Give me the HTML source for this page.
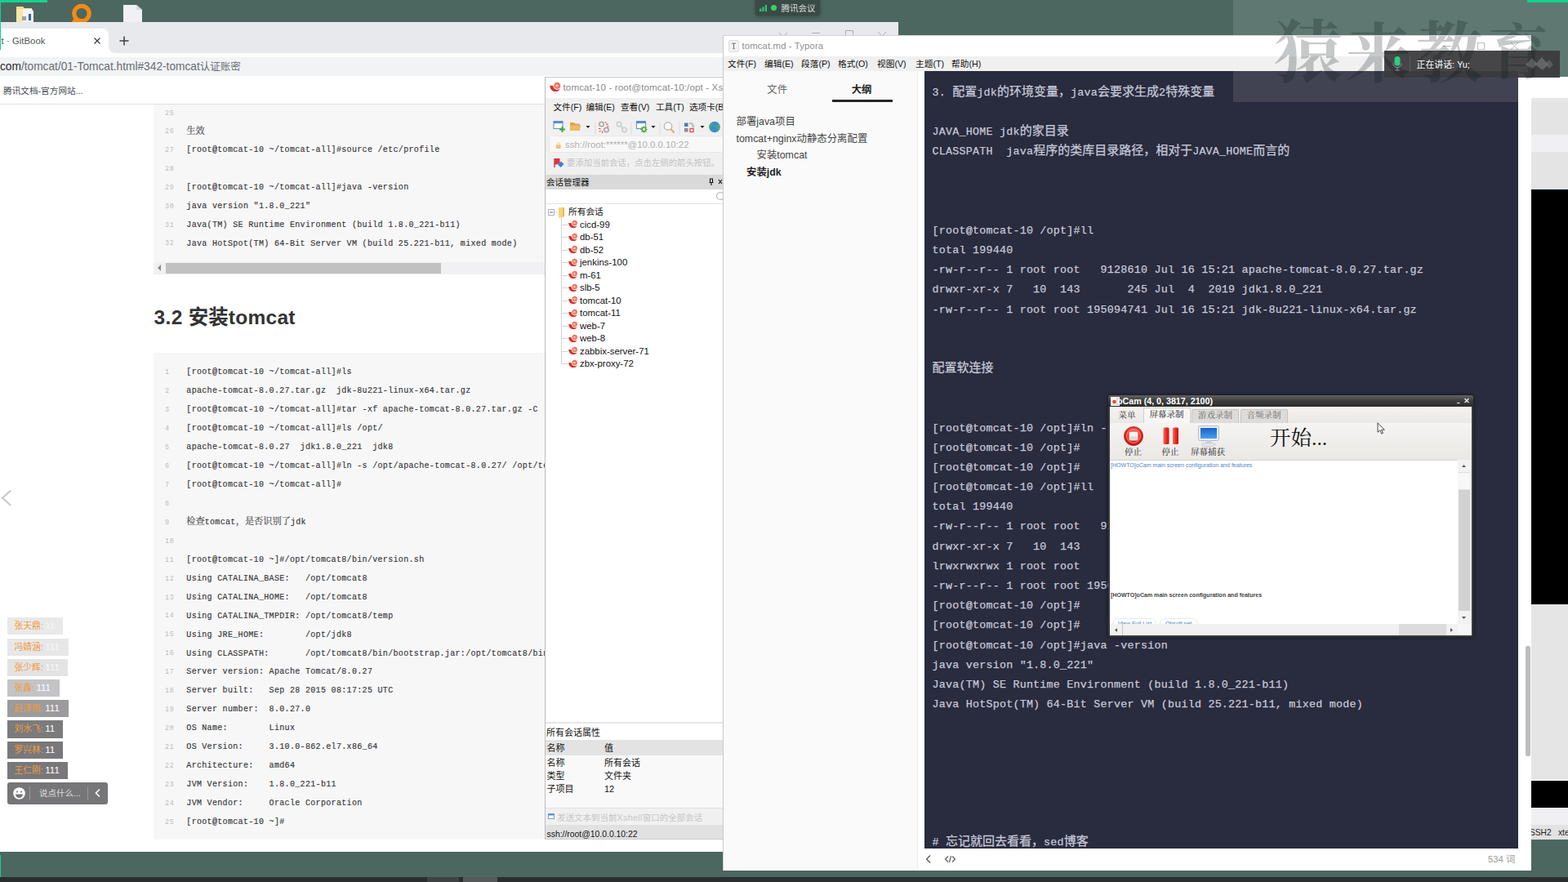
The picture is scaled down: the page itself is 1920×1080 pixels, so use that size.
<!DOCTYPE html>
<html lang="zh-CN"><head><meta charset="utf-8"><title>screen</title>
<style>
*{box-sizing:border-box;margin:0;padding:0}
html,body{width:1920px;height:1080px;overflow:hidden;background:#4b6760}
body{font-family:"Liberation Sans","Noto Sans CJK SC",sans-serif;font-size:12px;color:#222}
#screen{position:relative;width:1920px;height:1080px;overflow:hidden;background:#4b6760}
.a{position:absolute}
.t{position:absolute;white-space:pre;line-height:1}
.mono{font-family:"Liberation Mono","Noto Sans CJK SC",monospace}
.serif{font-family:"Liberation Serif","Noto Serif CJK SC",serif}
/* browser */
#br{left:0;top:27px;width:1100px;height:1016px;background:#fff;overflow:hidden}
.gl{position:absolute;left:0;white-space:pre;font-family:"Liberation Mono","Noto Sans CJK SC",monospace;font-size:10px;letter-spacing:.33px;line-height:14px;height:14px;color:#363636;-webkit-text-stroke:.15px #363636}
.gl i{position:absolute;left:202px;top:-.2px;-webkit-text-stroke:0;font-style:normal;color:#bcbcbc;font-size:8.33px;letter-spacing:.75px}
.gl b{position:absolute;left:228.3px;font-weight:normal}
.gl .c{font-family:"Liberation Serif","Noto Serif CJK SC",serif;font-size:11.2px;color:#555;letter-spacing:0}
/* typora */
#ty{left:885px;top:43px;width:990px;height:1023px;background:#fff;overflow:hidden}
.tl{position:absolute;left:256.5px;white-space:pre;font-family:"Liberation Mono","Noto Sans CJK SC",monospace;font-size:13.33px;letter-spacing:.243px;line-height:18px;height:18px;color:#c6c9da;-webkit-text-stroke:.25px #c6c9da}
.tl .c{font-family:"Liberation Sans","Noto Sans CJK SC",sans-serif;font-size:15px;letter-spacing:0}
/* xshell */
#xs{left:667px;top:94px;width:218px;height:934px;background:#fff;overflow:hidden}
.xi{position:absolute;left:43px;font-size:11.4px;line-height:14px;height:14px;white-space:pre;color:#111}
.cj,.c{white-space:nowrap;letter-spacing:0;line-height:0}

</style></head>
<body>
<div id="screen">

<!-- back-right window (Xshell main behind Typora) -->
<div class="a" style="left:1875px;top:94px;width:45px;height:934px;background:#fff"></div>
<div class="a" style="left:1875px;top:165px;width:45px;height:22px;background:#f0eff1"></div>
<div class="a" style="left:1875px;top:120px;width:45px;height:45px;background:#e4e4e4"></div>
<div class="a" style="left:1875px;top:186px;width:45px;height:45px;background:#e4e4e4"></div>
<div class="a" style="left:1875px;top:231px;width:45px;height:1px;background:#cfe0f0"></div>
<div class="a" style="left:1875px;top:232px;width:45px;height:508px;background:#000"></div>
<div class="a" style="left:1875px;top:740px;width:45px;height:215px;background:#e5e5e5"></div>
<div class="a" style="left:1875px;top:956px;width:45px;height:32.5px;background:#000"></div>
<div class="a" style="left:1875px;top:988.5px;width:45px;height:21.5px;background:#f0eff1"></div>
<div class="a" style="left:1875px;top:1010px;width:45px;height:18.3px;background:#e2e2e2"></div>
<div class="t" style="left:1873px;top:1015.3px;font-size:10.2px;color:#222">SSH2</div>
<div class="t" style="left:1908px;top:1015.3px;font-size:10.2px;color:#222">xte</div>
<!-- desktop icons -->
<svg class="a" style="left:18px;top:5px" width="26" height="22" viewBox="0 0 26 22">
  <path d="M2 3h8l2 2h9v17H2z" fill="#f3dc8e"/><path d="M2 6h19v16H2z" fill="#f7e6a6"/>
  <path d="M10 6h11l2 3v13H10z" fill="#f4f4f6"/><path d="M17 12h3v8h-3z" fill="#2f62b5"/><path d="M9 15h5v5H9z" fill="#7a7f8a" opacity=".7"/>
</svg>
<svg class="a" style="left:87px;top:3px" width="26" height="24" viewBox="0 0 26 24">
  <circle cx="13" cy="13.5" r="9.2" fill="none" stroke="#f88a10" stroke-width="5.2"/><path d="M3.5 19l-2.5 5h6z" fill="#f88a10"/>
</svg>
<svg class="a" style="left:151px;top:6px" width="24" height="21" viewBox="0 0 24 21">
  <path d="M0 0h16l7 6v15H0z" fill="#f1f0f4"/><path d="M16 0l7 6h-7z" fill="#d9d8de"/>
</svg>


<div id="br" class="a">
  <!-- tab strip -->
  <div class="a" style="left:0;top:0;width:1100px;height:38px;background:#e7e9ed"></div>
  <div class="a" style="left:-10px;top:8px;width:143px;height:30px;background:#fff;border-radius:8px 8px 0 0"></div>
  <svg class="a" style="left:133px;top:30px" width="8" height="8" viewBox="0 0 8 8"><path d="M0 0v8h8A8 8 0 0 1 0 0z" fill="#fff"/></svg>
  <div class="t" style="left:1.5px;top:18.3px;font-size:11.3px;color:#54575b;letter-spacing:.05px">t · GitBook</div>
  <svg class="a" style="left:114px;top:18px" width="10" height="10" viewBox="0 0 10 10"><path d="M1.5 1.5l7 7M8.5 1.5l-7 7" stroke="#3c4043" stroke-width="1.3" fill="none"/></svg>
  <svg class="a" style="left:146px;top:17px" width="12" height="12" viewBox="0 0 12 12"><path d="M6 .5v11M.5 6h11" stroke="#3c4043" stroke-width="1.5" fill="none"/></svg>
  <!-- window controls (inactive) -->
  <svg class="a" style="left:940px;top:4px" width="160" height="20" viewBox="0 0 160 20">
    <g stroke="#a9acb1" stroke-width="1" fill="none"><path d="M14 9l5 5 5-5"/><path d="M54 9.5h10"/><rect x="95.5" y="6.5" width="9" height="9"/><path d="M135 8l10 10M145 8l-10 10"/></g>
  </svg>
  <!-- toolbar / url -->
  <div class="a" style="left:0;top:38px;width:1100px;height:29px;background:#fff"></div>
  <div class="a" style="left:-30px;top:43px;width:1200px;height:23px;background:#f1f3f4;border-radius:12px"></div>
  <div class="t" style="left:0;top:47.6px;font-size:13.72px;color:#686c71"><span style="color:#26282b">com</span>/tomcat/01-Tomcat.html#342-tomcat<span style="font-size:12.5px"><span class="cj">认证账密</span></span></div>
  <!-- bookmarks -->
  <div class="t" style="left:4px;top:79.2px;font-size:10.65px;color:#4a4d51"><span class="cj">腾讯文档</span>-<span class="cj">官方网站</span>...</div>
  <div class="a" style="left:0;top:100px;width:1100px;height:1px;background:#dfe1e5"></div>
  <!-- page -->
  <svg class="a" style="left:0;top:572px" width="16" height="22" viewBox="0 0 16 22"><path d="M13.2 1.6L2.9 10.7l10.3 9.1" stroke="#c9c9c9" stroke-width="2.1" fill="none"/></svg>
  <div class="a" style="left:188px;top:101px;width:700px;height:193px;background:#f7f7f8"></div>
  <div class="a" style="left:188px;top:293.5px;width:700px;height:15px;background:#f1f0f2"></div>
  <div class="a" style="left:203px;top:294.5px;width:337px;height:13px;background:#c1c1c1"></div>
  <svg class="a" style="left:192px;top:297px" width="6" height="8" viewBox="0 0 6 8"><path d="M5 0v8L1 4z" fill="#8a8a8a"/></svg>
  <div class="t" style="left:188.6px;top:350px;font-size:24.5px;font-weight:bold;color:#333;letter-spacing:.3px">3.2 <span class="cj">安装</span>tomcat</div>
  <div class="a" style="left:188px;top:405px;width:700px;height:596px;background:#f7f7f8"></div>
  <div class="gl" style="top:104.7px"><i>25</i><b></b></div>
  <div class="gl" style="top:127.6px"><i>26</i><b><span class="c"><span class="cj">生效</span></span></b></div>
  <div class="gl" style="top:150.4px"><i>27</i><b>[root@tomcat-10 ~/tomcat-all]#source /etc/profile</b></div>
  <div class="gl" style="top:173.3px"><i>28</i><b></b></div>
  <div class="gl" style="top:196.1px"><i>29</i><b>[root@tomcat-10 ~/tomcat-all]#java -version</b></div>
  <div class="gl" style="top:219.0px"><i>30</i><b>java version "1.8.0_221"</b></div>
  <div class="gl" style="top:241.8px"><i>31</i><b>Java(TM) SE Runtime Environment (build 1.8.0_221-b11)</b></div>
  <div class="gl" style="top:264.6px"><i>32</i><b>Java HotSpot(TM) 64-Bit Server VM (build 25.221-b11, mixed mode)</b></div>
  <div class="gl" style="top:422.4px"><i>1</i><b>[root@tomcat-10 ~/tomcat-all]#ls</b></div>
  <div class="gl" style="top:445.3px"><i>2</i><b>apache-tomcat-8.0.27.tar.gz  jdk-8u221-linux-x64.tar.gz</b></div>
  <div class="gl" style="top:468.3px"><i>3</i><b>[root@tomcat-10 ~/tomcat-all]#tar -xf apache-tomcat-8.0.27.tar.gz -C</b></div>
  <div class="gl" style="top:491.2px"><i>4</i><b>[root@tomcat-10 ~/tomcat-all]#ls /opt/</b></div>
  <div class="gl" style="top:514.2px"><i>5</i><b>apache-tomcat-8.0.27  jdk1.8.0_221  jdk8</b></div>
  <div class="gl" style="top:537.1px"><i>6</i><b>[root@tomcat-10 ~/tomcat-all]#ln -s /opt/apache-tomcat-8.0.27/ /opt/tomcat8</b></div>
  <div class="gl" style="top:560.0px"><i>7</i><b>[root@tomcat-10 ~/tomcat-all]#</b></div>
  <div class="gl" style="top:583.0px"><i>8</i><b></b></div>
  <div class="gl" style="top:605.9px"><i>9</i><b><span class="c"><span class="cj">检查</span></span>tomcat<span class="c"><span class="cj">，是否识别了</span></span>jdk</b></div>
  <div class="gl" style="top:628.9px"><i>10</i><b></b></div>
  <div class="gl" style="top:651.8px"><i>11</i><b>[root@tomcat-10 ~]#/opt/tomcat8/bin/version.sh</b></div>
  <div class="gl" style="top:674.7px"><i>12</i><b>Using CATALINA_BASE:   /opt/tomcat8</b></div>
  <div class="gl" style="top:697.7px"><i>13</i><b>Using CATALINA_HOME:   /opt/tomcat8</b></div>
  <div class="gl" style="top:720.6px"><i>14</i><b>Using CATALINA_TMPDIR: /opt/tomcat8/temp</b></div>
  <div class="gl" style="top:743.6px"><i>15</i><b>Using JRE_HOME:        /opt/jdk8</b></div>
  <div class="gl" style="top:766.5px"><i>16</i><b>Using CLASSPATH:       /opt/tomcat8/bin/bootstrap.jar:/opt/tomcat8/bin/tomcat-juli.jar</b></div>
  <div class="gl" style="top:789.4px"><i>17</i><b>Server version: Apache Tomcat/8.0.27</b></div>
  <div class="gl" style="top:812.4px"><i>18</i><b>Server built:   Sep 28 2015 08:17:25 UTC</b></div>
  <div class="gl" style="top:835.3px"><i>19</i><b>Server number:  8.0.27.0</b></div>
  <div class="gl" style="top:858.3px"><i>20</i><b>OS Name:        Linux</b></div>
  <div class="gl" style="top:881.2px"><i>21</i><b>OS Version:     3.10.0-862.el7.x86_64</b></div>
  <div class="gl" style="top:904.1px"><i>22</i><b>Architecture:   amd64</b></div>
  <div class="gl" style="top:927.1px"><i>23</i><b>JVM Version:    1.8.0_221-b11</b></div>
  <div class="gl" style="top:950.0px"><i>24</i><b>JVM Vendor:     Oracle Corporation</b></div>
  <div class="gl" style="top:973.0px"><i>25</i><b>[root@tomcat-10 ~]#</b></div>
</div>


<svg width="0" height="0" style="position:absolute"><defs>
<symbol id="swirl" viewBox="0 0 14 12.4"><path d="M.2 5.2C1.5 4.6 3.5 4.6 4.6 5.2 4.8 8 7 10 9.8 9.8c1.2-.1 2.2-.6 2.8-1.2C12.2 11 9.6 12.3 7.2 12.3 3.4 12.3.6 9.3.2 5.2z" fill="#d63228"/><circle cx="9.3" cy="4.9" r="4.4" fill="#e5634f" stroke="#fff" stroke-width=".9"/><circle cx="9.2" cy="5.1" r="2.7" fill="#f08d78"/><circle cx="8.8" cy="4.9" r="1.3" fill="#fbc7b8"/></symbol>
</defs></svg>
<div id="xs" class="a">
  <div class="a" style="left:0;top:0;width:1px;height:934px;background:#bdbdbd;z-index:3"></div>
  <div class="a" style="left:0;top:0;width:218px;height:1px;background:#c9c9c9"></div>
  <!-- title -->
  <svg class="a" style="left:5.5px;top:6px" width="14" height="12.4" viewBox="0 0 14 12.4"><use href="#swirl"/></svg>
  <div class="t" style="left:22.5px;top:6.5px;font-size:11.6px;color:#8b8b8b;letter-spacing:.12px">tomcat-10 - root@tomcat-10:/opt - Xs</div>
  <!-- menu -->
  <div class="a" style="left:1px;top:26px;width:217px;height:94px;background:#f0f0f0"></div>
  <div class="t" style="left:10.5px;top:32px;font-size:10.6px;color:#111"><span class="cj">文件</span>(F)</div>
  <div class="t" style="left:50.5px;top:32px;font-size:10.6px;color:#111"><span class="cj">编辑</span>(E)</div>
  <div class="t" style="left:93px;top:32px;font-size:10.6px;color:#111"><span class="cj">查看</span>(V)</div>
  <div class="t" style="left:136px;top:32px;font-size:10.6px;color:#111"><span class="cj">工具</span>(T)</div>
  <div class="t" style="left:177px;top:32px;font-size:10.6px;color:#111"><span class="cj">选项卡</span>(B)</div>
  <!-- toolbar icons -->
  <svg class="a" style="left:8px;top:50px" width="210" height="22" viewBox="0 0 210 22">
    <rect x="3" y="4.5" width="11" height="9" fill="#fff" stroke="#6a92c4" stroke-width="1.1"/><rect x="3" y="4.5" width="11" height="2.6" fill="#5b8fc4"/><path d="M13.5 11v7M10 14.5h7" stroke="#37a83c" stroke-width="1.9"/>
    <path d="M23 6h5l1.5 1.5H35V16H23z" fill="#dfa550"/><path d="M23 9.5h13.5l-2 6.5H23z" fill="#eebb66"/>
    <path d="M42.5 10h5l-2.5 3z" fill="#222"/>
    <path d="M54 5.5v15" stroke="#dcdcdc" stroke-width="1"/>
    <g fill="none" stroke="#b7a6aa" stroke-width="1.7"><circle cx="61.5" cy="8" r="2.7"/><circle cx="67.5" cy="15" r="2.7"/></g><path d="M66 5l1.5 2M69.5 7.5l-2 1.5M70.5 11h-2.5M59 17.5l1.5-2M62.5 19v-2.5M58 13.5h2.5" stroke="#e04a58" stroke-width="1.1"/>
    <g fill="none" stroke="#cbcbcb" stroke-width="1.6"><circle cx="83" cy="8" r="2.7"/><circle cx="89.5" cy="15" r="2.7"/><path d="M85 10l2.5 3"/></g>
    <path d="M98 5.5v15" stroke="#dcdcdc" stroke-width="1"/>
    <rect x="104.5" y="4.5" width="11" height="9" fill="#fff" stroke="#6a92c4" stroke-width="1.1"/><rect x="104.5" y="4.5" width="11" height="2.6" fill="#5b8fc4"/><circle cx="113.5" cy="14.5" r="3.1" fill="#4aa93f"/><path d="M113.5 10.2v8.6M109.2 14.5h8.6M110.5 11.5l6 6M116.5 11.5l-6 6" stroke="#4aa93f" stroke-width="1.2"/><circle cx="113.5" cy="14.5" r="1.4" fill="#fff"/>
    <path d="M122.5 10h5l-2.5 3z" fill="#222"/>
    <path d="M133 5.5v15" stroke="#dcdcdc" stroke-width="1"/>
    <circle cx="143" cy="10.5" r="4.7" fill="#fbfbfb" stroke="#b9b9b9" stroke-width="1.4"/><path d="M146.5 14l4 4.5" stroke="#d9a970" stroke-width="1.9"/>
    <path d="M157 5.5v15" stroke="#dcdcdc" stroke-width="1"/>
    <rect x="163" y="6.5" width="4.5" height="4.5" fill="#3f7fc9"/><rect x="163" y="13" width="4.5" height="4.5" fill="#8b8b8b"/><rect x="170" y="13.5" width="4" height="4" fill="#fff" stroke="#e0464f" stroke-width="1.3"/><path d="M169 6c3-.5 5 1 5.5 4l1.5-.5-2 3-2.5-2 1.5-.3c-.5-1.7-2-2.7-4-2.2z" fill="#b5b5b5"/>
    <path d="M182.5 10h5l-2.5 3z" fill="#222"/>
    <circle cx="200" cy="11.5" r="6.8" fill="#3e8ed0"/><path d="M196 6.5c2 0 3 1.5 2 3s-3 1-3 3 2 2 2 4c-3-1-4.5-4.5-3-8zM202 8.5c2-.5 4 1 4 3.5s-1.5 4-3 4.5c0-2 1-2.5 0-4s-2-2-1-4z" fill="#46b06a"/>
  </svg>
  <!-- address -->
  <div class="a" style="left:5px;top:72px;width:214px;height:21px;background:#f8f8f8;border:1px solid #e9e9e9"></div>
  <svg class="a" style="left:12.5px;top:80px" width="7.5" height="8.3" viewBox="0 0 9 10"><rect x="1" y="4" width="7" height="5.5" rx="1" fill="#f0c27a"/><path d="M2.5 4V3a2 2 0 0 1 4 0v1" fill="none" stroke="#f0c27a" stroke-width="1.1"/></svg>
  <div class="t" style="left:25px;top:78.3px;font-size:11.4px;color:#b0b0b0">ssh://root:******@10.0.0.10:22</div>
  <!-- tip -->
  <svg class="a" style="left:11px;top:99px" width="13" height="13" viewBox="0 0 13 13"><path d="M1 1h6.5v6L1 9z" fill="#e0343c"/><path d="M5 8.5L9 4.5 12.5 8 8.5 12z" fill="#3c82d3"/><path d="M1 1v11" stroke="#e0343c" stroke-width="1.4"/></svg>
  <div class="t" style="left:27px;top:101px;font-size:10.4px;letter-spacing:.16px;color:#c3c3c3"><span class="cj">要添加当前会话，点击左侧的箭头按钮。</span></div>
  <!-- session manager header -->
  <div class="a" style="left:1px;top:120px;width:217px;height:18px;background:#d9d9d9"></div>
  <div class="t" style="left:2px;top:123.8px;font-size:10.5px;color:#111"><span class="cj">会话管理器</span></div>
  <svg class="a" style="left:200px;top:124px" width="18" height="10" viewBox="0 0 18 10"><path d="M2.5 1h3v4.5h-3zM1.5 5.5h5M4 5.5V9" stroke="#111" stroke-width="1.1" fill="none"/><path d="M13 2l4 5M17 2l-4 5" stroke="#111" stroke-width="1.2"/></svg>
  <div class="a" style="left:1px;top:138px;width:217px;height:18px;background:#fff;border-bottom:1px solid #e3e3e3"></div>
  <svg class="a" style="left:208px;top:140px" width="12" height="12" viewBox="0 0 12 12"><circle cx="7" cy="6" r="4.5" fill="none" stroke="#b5b5b5" stroke-width="1.2"/></svg>
  <!-- tree -->
  <svg class="a" style="left:3px;top:159px" width="24" height="14" viewBox="0 0 24 14"><rect x="1.5" y="3.5" width="7" height="7" fill="#fff" stroke="#a9b4c2"/><path d="M3 7h4" stroke="#5a6a80"/><path d="M9 7h4" stroke="#d4d4d4"/><path d="M14 1h6v11l-1.5 1.5H14z" fill="#f6d57a"/><path d="M19 1h2v10.5l-2 2z" fill="#e9bd55"/></svg>
  <div class="a" style="left:20px;top:172px;width:1px;height:179px;background:#d4d4d4"></div>
  <div class="t" style="left:29px;top:160.2px;font-size:10.7px;color:#111"><span class="cj">所有会话</span></div>
  <svg class="a" style="left:28.7px;top:175.4px" width="11.6" height="10.3" viewBox="0 0 14 12.4"><use href="#swirl"/></svg><div class="xi" style="top:173.7px">cicd-99</div>
  <div class="a" style="left:20px;top:180.7px;width:8px;height:1px;background:#d4d4d4"></div>
  <svg class="a" style="left:28.7px;top:190.9px" width="11.6" height="10.3" viewBox="0 0 14 12.4"><use href="#swirl"/></svg><div class="xi" style="top:189.2px">db-51</div>
  <div class="a" style="left:20px;top:196.2px;width:8px;height:1px;background:#d4d4d4"></div>
  <svg class="a" style="left:28.7px;top:206.4px" width="11.6" height="10.3" viewBox="0 0 14 12.4"><use href="#swirl"/></svg><div class="xi" style="top:204.7px">db-52</div>
  <div class="a" style="left:20px;top:211.7px;width:8px;height:1px;background:#d4d4d4"></div>
  <svg class="a" style="left:28.7px;top:221.8px" width="11.6" height="10.3" viewBox="0 0 14 12.4"><use href="#swirl"/></svg><div class="xi" style="top:220.1px">jenkins-100</div>
  <div class="a" style="left:20px;top:227.1px;width:8px;height:1px;background:#d4d4d4"></div>
  <svg class="a" style="left:28.7px;top:237.3px" width="11.6" height="10.3" viewBox="0 0 14 12.4"><use href="#swirl"/></svg><div class="xi" style="top:235.6px">m-61</div>
  <div class="a" style="left:20px;top:242.6px;width:8px;height:1px;background:#d4d4d4"></div>
  <svg class="a" style="left:28.7px;top:252.8px" width="11.6" height="10.3" viewBox="0 0 14 12.4"><use href="#swirl"/></svg><div class="xi" style="top:251.1px">slb-5</div>
  <div class="a" style="left:20px;top:258.1px;width:8px;height:1px;background:#d4d4d4"></div>
  <svg class="a" style="left:28.7px;top:268.3px" width="11.6" height="10.3" viewBox="0 0 14 12.4"><use href="#swirl"/></svg><div class="xi" style="top:266.6px">tomcat-10</div>
  <div class="a" style="left:20px;top:273.6px;width:8px;height:1px;background:#d4d4d4"></div>
  <svg class="a" style="left:28.7px;top:283.8px" width="11.6" height="10.3" viewBox="0 0 14 12.4"><use href="#swirl"/></svg><div class="xi" style="top:282.1px">tomcat-11</div>
  <div class="a" style="left:20px;top:289.1px;width:8px;height:1px;background:#d4d4d4"></div>
  <svg class="a" style="left:28.7px;top:299.2px" width="11.6" height="10.3" viewBox="0 0 14 12.4"><use href="#swirl"/></svg><div class="xi" style="top:297.5px">web-7</div>
  <div class="a" style="left:20px;top:304.5px;width:8px;height:1px;background:#d4d4d4"></div>
  <svg class="a" style="left:28.7px;top:314.7px" width="11.6" height="10.3" viewBox="0 0 14 12.4"><use href="#swirl"/></svg><div class="xi" style="top:313.0px">web-8</div>
  <div class="a" style="left:20px;top:320.0px;width:8px;height:1px;background:#d4d4d4"></div>
  <svg class="a" style="left:28.7px;top:330.2px" width="11.6" height="10.3" viewBox="0 0 14 12.4"><use href="#swirl"/></svg><div class="xi" style="top:328.5px">zabbix-server-71</div>
  <div class="a" style="left:20px;top:335.5px;width:8px;height:1px;background:#d4d4d4"></div>
  <svg class="a" style="left:28.7px;top:345.7px" width="11.6" height="10.3" viewBox="0 0 14 12.4"><use href="#swirl"/></svg><div class="xi" style="top:344.0px">zbx-proxy-72</div>
  <div class="a" style="left:20px;top:351.0px;width:8px;height:1px;background:#d4d4d4"></div>
  <!-- properties -->
  <div class="a" style="left:1px;top:790px;width:217px;height:2px;background:#e6e6e6"></div>
  <div class="t" style="left:2px;top:797.5px;font-size:11px;color:#111"><span class="cj">所有会话属性</span></div>
  <div class="a" style="left:1px;top:812px;width:217px;height:19px;background:#e3e3e3"></div>
  <div class="a" style="left:1px;top:831px;width:217px;height:64px;background:#f9f9fa"></div>
  <div class="t" style="left:2.5px;top:817.2px;font-size:11px;color:#111"><span class="cj">名称</span></div><div class="t" style="left:73px;top:817.2px;font-size:11px;color:#111"><span class="cj">值</span></div>
  <div class="t" style="left:2.5px;top:834.6px;font-size:11px;color:#111"><span class="cj">名称</span></div><div class="t" style="left:73px;top:834.6px;font-size:11px;color:#111"><span class="cj">所有会话</span></div>
  <div class="t" style="left:2.5px;top:850.5px;font-size:11px;color:#111"><span class="cj">类型</span></div><div class="t" style="left:73px;top:850.5px;font-size:11px;color:#111"><span class="cj">文件夹</span></div>
  <div class="t" style="left:2.5px;top:866.5px;font-size:11px;color:#111"><span class="cj">子项目</span></div><div class="t" style="left:73px;top:867px;font-size:11px;color:#111">12</div>
  <div class="a" style="left:1px;top:895px;width:217px;height:21px;background:#f0f0f0;border-top:1px solid #e2e2e2"></div>
  <svg class="a" style="left:4px;top:902px" width="9" height="8" viewBox="0 0 9 8"><rect x=".5" y=".5" width="7" height="6" fill="#fff" stroke="#7aa0d0"/><rect x=".5" y=".5" width="7" height="2" fill="#5b8fc4"/></svg>
  <div class="t" style="left:15px;top:902px;font-size:10.5px;letter-spacing:.45px;color:#c6c6c6"><span class="cj">发送文本到当前</span>Xshell<span class="cj">窗口的全部会话</span></div>
  <div class="a" style="left:1px;top:916px;width:217px;height:18px;background:#e1e1e1;border-bottom:1px solid #c9c9c9"></div>
  <div class="t" style="left:2.5px;top:922.6px;font-size:10.4px;color:#111">ssh://root@10.0.0.10:22</div>
</div>


<div id="ty" class="a">
  <div class="a" style="left:0;top:0;width:1px;height:1023px;background:#c9c9c9;z-index:3"></div>
  <div class="a" style="left:0;top:0;width:990px;height:1px;background:#d5d5d5;z-index:3"></div>
  <!-- title bar -->
  <svg class="a" style="left:7px;top:6px" width="13" height="15" viewBox="0 0 13 15"><rect x=".5" y=".5" width="12" height="14" rx="1.5" fill="#f2f2f2" stroke="#dedede"/><path d="M4 4.2h5M6.5 4.2v6.5M5.3 10.7h2.4" stroke="#777" stroke-width="1" fill="none"/></svg>
  <div class="t" style="left:23.5px;top:7.8px;font-size:11.3px;color:#8e8e8e;letter-spacing:.15px">tomcat.md - Typora</div>
  <svg class="a" style="left:870px;top:4px" width="120" height="20" viewBox="0 0 120 20"><g stroke="#b4b4b4" stroke-width="1" fill="none"><path d="M12 9.5h10"/><rect x="54.5" y="5.5" width="8" height="8"/><path d="M95 5l9 9M104 5l-9 9"/></g></svg>
  <!-- menu -->
  <div class="a" style="left:1px;top:26px;width:989px;height:18px;background:#f0f0f0"></div>
  <div class="t" style="left:6px;top:30px;font-size:10.7px;color:#111"><span class="cj">文件</span>(F)</div><div class="t" style="left:51px;top:30px;font-size:10.7px;color:#111"><span class="cj">编辑</span>(E)</div><div class="t" style="left:96px;top:30px;font-size:10.7px;color:#111"><span class="cj">段落</span>(P)</div><div class="t" style="left:141px;top:30px;font-size:10.7px;color:#111"><span class="cj">格式</span>(O)</div><div class="t" style="left:189px;top:30px;font-size:10.7px;color:#111"><span class="cj">视图</span>(V)</div><div class="t" style="left:236px;top:30px;font-size:10.7px;color:#111"><span class="cj">主题</span>(T)</div><div class="t" style="left:280px;top:30px;font-size:10.7px;color:#111"><span class="cj">帮助</span>(H)</div>
  <!-- sidebar -->
  <div class="a" style="left:1px;top:44px;width:238px;height:979px;background:#fafafa;border-right:1px solid #ededed"></div>
  <div class="t" style="left:54.3px;top:60.5px;font-size:12.4px;color:#666"><span class="cj">文件</span></div>
  <div class="t" style="left:157.7px;top:60.5px;font-size:12.4px;color:#222;font-weight:bold"><span class="cj">大纲</span></div>
  <div class="a" style="left:134px;top:78.5px;width:74px;height:3.5px;background:#262626"></div>
  <div class="t" style="left:16.5px;top:100px;font-size:12.4px;color:#444"><span class="cj">部署</span>java<span class="cj">项目</span></div>
  <div class="t" style="left:16.5px;top:120.5px;font-size:12.4px;color:#444">tomcat+nginx<span class="cj">动静态分离配置</span></div>
  <div class="t" style="left:41.5px;top:141px;font-size:12.4px;color:#444"><span class="cj">安装</span>tomcat</div>
  <div class="t" style="left:29px;top:162px;font-size:12.4px;color:#222;font-weight:bold"><span class="cj">安装</span>jdk</div>
  <!-- content -->
  <div class="a" style="left:247px;top:44px;width:727px;height:952px;background:#292b3e"></div>
  <div class="tl" style="top:61.7px">3. <span class="c"><span class="cj">配置</span></span>jdk<span class="c"><span class="cj">的环境变量，</span></span>java<span class="c"><span class="cj">会要求生成</span></span>2<span class="c"><span class="cj">特殊变量</span></span></div>
  <div class="tl" style="top:110.0px">JAVA_HOME jdk<span class="c"><span class="cj">的家目录</span></span></div>
  <div class="tl" style="top:134.2px">CLASSPATH  java<span class="c"><span class="cj">程序的类库目录路径，相对于</span></span>JAVA_HOME<span class="c"><span class="cj">而言的</span></span></div>
  <div class="tl" style="top:230.9px">[root@tomcat-10 /opt]#ll</div>
  <div class="tl" style="top:255.1px">total 199440</div>
  <div class="tl" style="top:279.2px">-rw-r--r-- 1 root root   9128610 Jul 16 15:21 apache-tomcat-8.0.27.tar.gz</div>
  <div class="tl" style="top:303.4px">drwxr-xr-x 7   10  143       245 Jul  4  2019 jdk1.8.0_221</div>
  <div class="tl" style="top:327.6px">-rw-r--r-- 1 root root 195094741 Jul 16 15:21 jdk-8u221-linux-x64.tar.gz</div>
  <div class="tl" style="top:400.1px"><span class="c"><span class="cj">配置软连接</span></span></div>
  <div class="tl" style="top:472.6px">[root@tomcat-10 /opt]#ln -s /opt/jdk1.8.0_221/ /opt/jdk8</div>
  <div class="tl" style="top:496.8px">[root@tomcat-10 /opt]#</div>
  <div class="tl" style="top:520.9px">[root@tomcat-10 /opt]#</div>
  <div class="tl" style="top:545.1px">[root@tomcat-10 /opt]#ll</div>
  <div class="tl" style="top:569.3px">total 199440</div>
  <div class="tl" style="top:593.4px">-rw-r--r-- 1 root root   9128610 Jul 16 15:21 apache-tomcat-8.0.27.tar.gz</div>
  <div class="tl" style="top:617.6px">drwxr-xr-x 7   10  143       245 Jul  4  2019 jdk1.8.0_221</div>
  <div class="tl" style="top:641.8px">lrwxrwxrwx 1 root root        18 Jul 16 15:30 jdk8 -&gt; /opt/jdk1.8.0_221/</div>
  <div class="tl" style="top:666.0px">-rw-r--r-- 1 root root 195094741 Jul 16 15:21 jdk-8u221-linux-x64.tar.gz</div>
  <div class="tl" style="top:690.1px">[root@tomcat-10 /opt]#</div>
  <div class="tl" style="top:714.3px">[root@tomcat-10 /opt]#</div>
  <div class="tl" style="top:738.5px">[root@tomcat-10 /opt]#java -version</div>
  <div class="tl" style="top:762.6px">java version "1.8.0_221"</div>
  <div class="tl" style="top:786.8px">Java(TM) SE Runtime Environment (build 1.8.0_221-b11)</div>
  <div class="tl" style="top:811.0px">Java HotSpot(TM) 64-Bit Server VM (build 25.221-b11, mixed mode)</div>
  <div class="tl" style="top:980.2px"># <span class="c"><span class="cj">忘记就回去看看，</span></span>sed<span class="c"><span class="cj">博客</span></span></div>
  <!-- scrollbar -->
  <div class="a" style="left:983.3px;top:748px;width:6px;height:135px;background:#bdbdbd;border-radius:2px"></div>
  <!-- bottom bar -->
  <svg class="a" style="left:246px;top:1002px" width="44" height="14" viewBox="0 0 44 14"><path d="M8 2.5L3.5 7 8 11.5" stroke="#555" stroke-width="1.3" fill="none"/><path d="M30 3.5L26.5 7 30 10.5M35 3.5L38.5 7 35 10.5M33.5 3l-2 8" stroke="#555" stroke-width="1.1" fill="none"/></svg>
  <div class="t" style="left:937px;top:1003.5px;font-size:11.3px;color:#9a9a9a">534 <span class="cj">词</span></div>
</div>


<div class="a" style="left:1357px;top:484px;width:447px;height:296px;background:#3b3b3b;border-radius:3px;box-shadow:0 0 5px rgba(0,0,0,.55)">
  <div class="a" style="left:0;top:0;width:447px;height:14px;border-radius:3px 3px 0 0;background:linear-gradient(#626262,#3f3f3f 45%,#2b2b2b)"></div>
  <svg class="a" style="left:3px;top:2px" width="11" height="11" viewBox="0 0 11 11"><rect width="11" height="11" fill="#f4f4f4"/><circle cx="4.5" cy="6" r="2.3" fill="#e24a3a"/><rect x="7" y="1" width="3" height="9" fill="#d9d9d9"/></svg>
  <div class="t" style="left:11px;top:1.5px;font-size:10.7px;font-weight:bold;color:#fff">oCam (4, 0, 3817, 2100)</div>
  <svg class="a" style="left:424px;top:2px" width="20" height="10" viewBox="0 0 20 10"><path d="M3 7.5h3.5" stroke="#ddd" stroke-width="1.2"/><path d="M12.5 2l5 5M17.5 2l-5 5" stroke="#eee" stroke-width="1.4"/></svg>
  <!-- body -->
  <div class="a" style="left:2px;top:14px;width:443px;height:280px;background:#efedeb"></div>
  <!-- tabs -->
  <div class="a" style="left:2px;top:14px;width:443px;height:20px;background:linear-gradient(#f4f3f1,#ebe9e6)"></div>
  <div class="a" style="left:2px;top:33.5px;width:443px;height:1px;background:#cfcdca"></div>
  <div class="a" style="left:43px;top:15px;width:58px;height:20px;background:#f7f6f4;border:1px solid #cfcdca;border-bottom:none;border-radius:2px 2px 0 0"></div>
  <div class="a" style="left:102px;top:17px;width:58px;height:17px;background:#dddcdb;border:1px solid #c6c5c3;border-bottom:none;border-radius:2px 2px 0 0"></div>
  <div class="a" style="left:162px;top:17px;width:58px;height:17px;background:#dddcdb;border:1px solid #c6c5c3;border-bottom:none;border-radius:2px 2px 0 0"></div>
  <div class="t serif" style="left:12.5px;top:19.6px;font-size:10.5px;color:#333"><span class="cj">菜单</span></div>
  <div class="t serif" style="left:50.5px;top:19.2px;font-size:10.5px;color:#111"><span class="cj">屏幕录制</span></div>
  <div class="t serif" style="left:110px;top:20px;font-size:10.5px;color:#6a6a6a"><span class="cj">游戏录制</span></div>
  <div class="t serif" style="left:169.5px;top:20px;font-size:10.5px;color:#6a6a6a"><span class="cj">音频录制</span></div>
  <!-- toolbar -->
  <div class="a" style="left:2px;top:34px;width:443px;height:45px;background:linear-gradient(#f5f4f2,#eae8e5)"></div>
  <svg class="a" style="left:18px;top:37px" width="26" height="26" viewBox="0 0 26 26"><defs><radialGradient id="rg1" cx=".5" cy=".35" r=".7"><stop offset="0" stop-color="#ff7a6e"/><stop offset=".6" stop-color="#e8251c"/><stop offset="1" stop-color="#b3140f"/></radialGradient></defs><circle cx="13" cy="13" r="11.5" fill="url(#rg1)" stroke="#a8201a" stroke-width=".8"/><circle cx="13" cy="13" r="8.3" fill="none" stroke="#f6b4ad" stroke-width="1" opacity=".7"/><rect x="7.7" y="7.7" width="10.6" height="10.6" rx="1.5" fill="#f7f3f2"/><rect x="7.7" y="13.5" width="10.6" height="4.8" rx="1" fill="#dedad9"/></svg>
  <svg class="a" style="left:65px;top:38px" width="24" height="24" viewBox="0 0 24 24"><defs><linearGradient id="lg1" x1="0" x2="1"><stop offset="0" stop-color="#ff6d60"/><stop offset=".5" stop-color="#ee2c22"/><stop offset="1" stop-color="#c8150f"/></linearGradient></defs><rect x="2.5" y="1.5" width="7" height="20.5" rx="1.5" fill="url(#lg1)"/><rect x="14" y="1.5" width="7" height="20.5" rx="1.5" fill="url(#lg1)"/></svg>
  <svg class="a" style="left:109px;top:36px" width="28" height="28" viewBox="0 0 28 28"><defs><linearGradient id="lg2" x1="0" y1="0" x2="0" y2="1"><stop offset="0" stop-color="#1565c6"/><stop offset="1" stop-color="#4a9ff0"/></linearGradient></defs><rect x="1.5" y="1.5" width="25" height="18" rx="2" fill="#e9edf2" stroke="#b7bdc6"/><rect x="4" y="4" width="20" height="13" fill="url(#lg2)"/><path d="M11 19.5h6l1 3.5h-8z" fill="#cfd4db"/><ellipse cx="14" cy="24.5" rx="8.5" ry="2.2" fill="#e3e6ea" stroke="#bfc4cc" stroke-width=".7"/></svg>
  <div class="t serif" style="left:20px;top:65.1px;font-size:10.5px;color:#222"><span class="cj">停止</span></div>
  <div class="t serif" style="left:65.5px;top:65.1px;font-size:10.5px;color:#222"><span class="cj">停止</span></div>
  <div class="t serif" style="left:101px;top:65.1px;font-size:10.5px;color:#222"><span class="cj">屏幕捕获</span></div>
  <div class="t serif" style="left:198px;top:40px;font-size:25.5px;color:#111"><span class="cj">开始</span>...</div>
  <svg class="a" style="left:329px;top:33px" width="11" height="16" viewBox="0 0 11 16"><path d="M1 .8v11.4l2.8-2.4 1.9 4.4 1.7-.8-1.9-4.2h3.8z" fill="#fff" stroke="#333" stroke-width=".9"/></svg>
  <!-- content -->
  <div class="a" style="left:2px;top:79px;width:426px;height:201px;background:#fff;border-top:1px solid #d5d3d0"></div>
  <div class="t" style="left:3px;top:82.3px;font-size:7.05px;color:#4d88c9">[HOWTO]oCam main screen configuration and features</div>
  <div class="t" style="left:3px;top:241.2px;font-size:7.05px;font-weight:bold;color:#444">[HOWTO]oCam main screen configuration and features</div>
  <div class="a" style="left:2px;top:273px;width:426px;height:7px;overflow:hidden">
    <div class="a" style="left:3px;top:0;width:54px;height:16px;border:1px solid #e4e9f0;border-radius:7px"></div>
    <div class="a" style="left:61px;top:0;width:47px;height:16px;border:1px solid #e4e9f0;border-radius:7px"></div>
    <div class="t" style="left:10px;top:3px;font-size:7px;color:#4d88c9">View Full List</div>
    <div class="t" style="left:68px;top:3px;font-size:7px;color:#4d88c9">Ohsoft.net</div>
  </div>
  <!-- v scrollbar -->
  <div class="a" style="left:428px;top:79px;width:15px;height:201px;background:#f3f3f3"></div>
  <div class="a" style="left:428px;top:94px;width:15px;height:22px;background:#f8f8f8;border-top:1px solid #dcdcdc;border-bottom:1px solid #e6e6e6"></div>
  <div class="a" style="left:429px;top:116px;width:14px;height:148px;background:#d2d2d2"></div>
  <svg class="a" style="left:432px;top:84px" width="7" height="5" viewBox="0 0 7 5"><path d="M3.5 1L6 4H1z" fill="#555"/></svg>
  <svg class="a" style="left:432px;top:270px" width="7" height="5" viewBox="0 0 7 5"><path d="M3.5 4L6 1H1z" fill="#555"/></svg>
  <!-- h scrollbar -->
  <div class="a" style="left:2px;top:280px;width:443px;height:14px;background:#f1f1f1"></div>
  <div class="a" style="left:17px;top:280px;width:1px;height:14px;background:#c9c9c9"></div>
  <div class="a" style="left:356px;top:280px;width:58px;height:14px;background:#dcdcdc"></div>
  <div class="a" style="left:428px;top:280px;width:17px;height:14px;background:#f6f6f6"></div>
  <svg class="a" style="left:7px;top:284px" width="5" height="7" viewBox="0 0 5 7"><path d="M1 3.5L4 1v5z" fill="#555"/></svg>
  <svg class="a" style="left:418px;top:284px" width="5" height="7" viewBox="0 0 5 7"><path d="M4 3.5L1 1v5z" fill="#555"/></svg>
</div>


<!-- speaking bar -->
<div class="a" style="left:1694.5px;top:62px;width:215px;height:32.5px;background:rgba(34,34,36,.94)"></div>
<svg class="a" style="left:1866px;top:66px" width="38" height="24" viewBox="0 0 38 24"><g fill="#8a8a8c" opacity=".55"><path d="M2 14l8-9 6 7-5 6z"/><path d="M14 13l8-9 8 9-7 7z" opacity=".8"/><path d="M26 12l5-5 5 6-5 5z" opacity=".6"/></g></svg>
<!-- watermark overlay -->
<div class="a" style="left:1510px;top:0;width:410px;height:125px;background:rgba(255,255,255,.115)"></div>
<svg class="a" style="left:1510px;top:0" width="410" height="125" viewBox="0 0 410 125"><g fill="rgba(10,20,22,.23)" font-family="'Liberation Serif','Noto Serif CJK SC',serif" font-weight="bold"><text x="50" y="94" font-size="84">猿</text><text x="138" y="94" font-size="80">来</text><text x="224" y="94" font-size="82">教</text><text x="312" y="90" font-size="74">育</text></g></svg>
<svg class="a" style="left:1705px;top:68px" width="12" height="20" viewBox="0 0 12 20"><rect x="2.5" y="1" width="7" height="11.5" rx="3.5" fill="#2fca82"/><path d="M.8 9.5a5.2 5.2 0 0 0 10.4 0M6 14.7v3M3.5 18h5" stroke="#8f9296" stroke-width="1" fill="none"/></svg>
<div class="a" style="left:1726px;top:69px;width:1px;height:19px;background:#5a5a5c"></div>
<div class="t" style="left:1734.5px;top:74px;font-size:10.9px;color:#fff"><span class="cj">正在讲话</span>: Yu;</div>
<!-- meeting pill -->
<div class="a" style="left:924.5px;top:-4px;width:79.5px;height:22.5px;background:#3a4a45;border-radius:4px;box-shadow:0 1px 4px rgba(0,0,0,.35)"></div>
<svg class="a" style="left:929px;top:4px" width="24" height="11" viewBox="0 0 24 11"><g fill="#2fc37c"><rect x="1" y="6.5" width="2.2" height="3.5"/><rect x="4.4" y="4.5" width="2.2" height="5.5"/><rect x="7.8" y="2" width="2.2" height="8"/><circle cx="18.5" cy="5.5" r="3.6" fill="#37cf6c"/></g></svg>
<div class="t" style="left:956.5px;top:4.5px;font-size:10.5px;color:#d5dad7"><span class="cj">腾讯会议</span></div>
<!-- chat overlay -->
<div class="a" style="left:9px;top:755.6px;width:68.0px;height:21.7px;background:#e9e9e9"></div>
<div class="t" style="left:17.5px;top:761.0px;font-size:10.8px;color:#f19a3c;letter-spacing:-.3px"><span class="cj">张天鼎</span>: <span style="color:#fff;opacity:0.55;letter-spacing:0;font-size:11.5px">11</span></div>
<div class="a" style="left:9px;top:781.5px;width:74.5px;height:21.0px;background:#e7e7e7"></div>
<div class="t" style="left:17.5px;top:786.5px;font-size:10.8px;color:#f19a3c;letter-spacing:-.3px"><span class="cj">冯婧涵</span>: <span style="color:#fff;opacity:0.7;letter-spacing:0;font-size:11.5px">111</span></div>
<div class="a" style="left:9px;top:806.5px;width:74.0px;height:21.5px;background:#e3e3e3"></div>
<div class="t" style="left:17.5px;top:811.8px;font-size:10.8px;color:#f19a3c;letter-spacing:-.3px"><span class="cj">张少辉</span>: <span style="color:#fff;opacity:0.75;letter-spacing:0;font-size:11.5px">111</span></div>
<div class="a" style="left:9px;top:832.0px;width:64.0px;height:20.5px;background:#c4c4c6"></div>
<div class="t" style="left:17.5px;top:836.8px;font-size:10.8px;color:#f19a3c;letter-spacing:-.3px"><span class="cj">张鑫</span>: <span style="color:#fff;opacity:1;letter-spacing:0;font-size:11.5px">111</span></div>
<div class="a" style="left:9px;top:857.0px;width:74.5px;height:21.0px;background:#9b9b9d"></div>
<div class="t" style="left:17.5px;top:862.0px;font-size:10.8px;color:#f19a3c;letter-spacing:-.3px"><span class="cj">赵泽雨</span>: <span style="color:#fff;opacity:1;letter-spacing:0;font-size:11.5px">111</span></div>
<div class="a" style="left:9px;top:882.0px;width:68.0px;height:21.5px;background:#7b7b7d"></div>
<div class="t" style="left:17.5px;top:887.2px;font-size:10.8px;color:#f19a3c;letter-spacing:-.3px"><span class="cj">刘水飞</span>: <span style="color:#fff;opacity:1;letter-spacing:0;font-size:11.5px">11</span></div>
<div class="a" style="left:9px;top:907.5px;width:68.0px;height:21.0px;background:#79797b"></div>
<div class="t" style="left:17.5px;top:912.5px;font-size:10.8px;color:#f19a3c;letter-spacing:-.3px"><span class="cj">罗兴林</span>: <span style="color:#fff;opacity:1;letter-spacing:0;font-size:11.5px">11</span></div>
<div class="a" style="left:9px;top:932.5px;width:74.0px;height:21.0px;background:#78787a"></div>
<div class="t" style="left:17.5px;top:937.5px;font-size:10.8px;color:#f19a3c;letter-spacing:-.3px"><span class="cj">王仁刚</span>: <span style="color:#fff;opacity:1;letter-spacing:0;font-size:11.5px">111</span></div>
<div class="a" style="left:9px;top:958px;width:123px;height:26.5px;background:#767678;border-radius:3px"></div>
<svg class="a" style="left:15px;top:963px" width="17" height="17" viewBox="0 0 17 17"><circle cx="8.5" cy="8.5" r="7.3" fill="#fff"/><circle cx="6" cy="6.5" r="1.1" fill="#767678"/><circle cx="11" cy="6.5" r="1.1" fill="#767678"/><path d="M4 9.5h9a4.5 4.5 0 0 1-9 0z" fill="#767678"/></svg>
<div class="a" style="left:36px;top:963px;width:1px;height:17px;background:#98989a"></div>
<div class="t" style="left:48px;top:965.5px;font-size:10.5px;color:#dcdcdc"><span class="cj">说点什么</span>...</div>
<div class="a" style="left:107px;top:963px;width:1px;height:17px;background:#98989a"></div>
<svg class="a" style="left:115px;top:965px" width="9" height="12" viewBox="0 0 9 12"><path d="M7 1.5L2.5 6 7 10.5" stroke="#fff" stroke-width="1.6" fill="none"/></svg>
<!-- green share border -->
<div class="a" style="left:0;top:0;width:58px;height:2.5px;background:#10d48e"></div>
<div class="a" style="left:0;top:0;width:1.2px;height:61px;background:#10d48e"></div>
<div class="a" style="left:1870px;top:0;width:50px;height:3px;background:#10d48e"></div>
<div class="a" style="left:0;top:1047px;width:1px;height:27px;background:#10d48e"></div>
<!-- taskbar -->
<div class="a" style="left:0;top:1074px;width:1920px;height:6px;background:#2a2e2f"></div>
<div class="a" style="left:523px;top:1074px;width:39px;height:6px;background:#3e4243"></div>
<div class="a" style="left:567px;top:1074px;width:42px;height:6px;background:#56595a"></div>

</div>
</body></html>
